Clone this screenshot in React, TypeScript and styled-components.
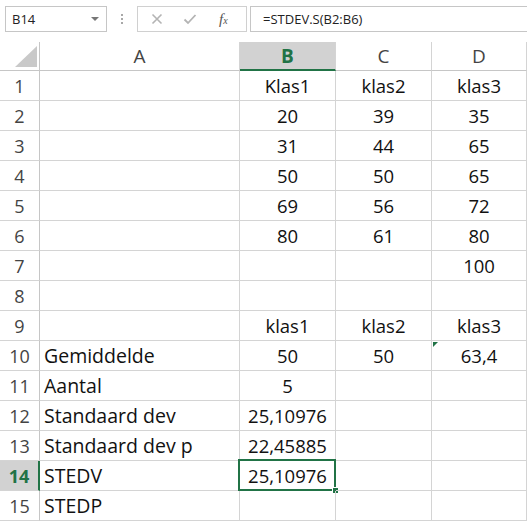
import React from "react"
import styled, { createGlobalStyle, css } from "styled-components"

const GlobalStyle = createGlobalStyle`
  html, body {
    margin: 0;
    padding: 0;
    background: #ffffff;
  }
  body {
    font-family: "Open Sans", "Liberation Sans", sans-serif;
  }
`

const GREEN = "#217346"
const LINE = "#d4d4d4"

const Page = styled.div`
  width: 527px;
  height: 521px;
  overflow: hidden;
  background: #ffffff;
`

const Toolbar = styled.div`
  display: flex;
  align-items: center;
  height: 26px;
  padding: 6px 0 0 5px;
  margin-bottom: 10px;
`

const NameBox = styled.div`
  box-sizing: border-box;
  width: 102px;
  height: 26px;
  border: 1px solid #c6c6c6;
  display: flex;
  align-items: center;
  justify-content: space-between;
  padding: 0 6px 0 6px;
  font-size: 13px;
  color: #222;
`

const Caret = styled.span`
  width: 0;
  height: 0;
  border-left: 4px solid transparent;
  border-right: 4px solid transparent;
  border-top: 4px solid #777;
  margin-right: 1px;
`

const Dots = styled.div`
  width: 30px;
  display: flex;
  flex-direction: column;
  align-items: center;
  gap: 2px;
  span {
    width: 2px;
    height: 2px;
    background: #a8a8a8;
  }
`

const FxButtons = styled.div`
  box-sizing: border-box;
  width: 110px;
  height: 26px;
  border: 1px solid #d0d0d0;
  display: flex;
  align-items: center;
  padding-left: 13px;
  gap: 20px;
  margin-right: 3px;
`

const Fx = styled.span`
  font-family: "Liberation Serif", "DejaVu Serif", serif;
  font-style: italic;
  font-size: 15px;
  color: #555;
  margin-left: 2px;
  sub {
    font-size: 10px;
    vertical-align: 0;
  }
`

const FormulaBox = styled.div`
  box-sizing: border-box;
  flex: 1;
  height: 26px;
  border: 1px solid #c6c6c6;
  border-right: none;
  display: flex;
  align-items: center;
  padding-left: 12px;
  font-size: 13px;
  color: #222;
`

const Sheet = styled.div`
  display: grid;
  grid-template-columns: 40px 200px 96px 96px 1fr;
  grid-template-rows: 29px repeat(15, 30px);
`

const Corner = styled.div`
  box-sizing: border-box;
  border-right: 1px solid #c6c6c6;
  border-bottom: 1px solid #c6c6c6;
  position: relative;
  &::after {
    content: "";
    position: absolute;
    right: 2px;
    bottom: 3px;
    width: 0;
    height: 0;
    border-left: 22px solid transparent;
    border-bottom: 21px solid #c9c9c9;
  }
`

const ColHead = styled.div<{ $active?: boolean }>`
  box-sizing: border-box;
  display: flex;
  align-items: center;
  justify-content: center;
  font-size: 19px;
  color: #444;
  border-right: 1px solid ${LINE};
  border-bottom: 1px solid #c6c6c6;
  ${(p) =>
    p.$active &&
    css`
      background: #d2d2d2;
      color: ${GREEN};
      font-weight: 700;
      border-bottom: 2px solid ${GREEN};
    `}
`

const RowHead = styled.div<{ $active?: boolean }>`
  box-sizing: border-box;
  display: flex;
  align-items: center;
  justify-content: center;
  font-size: 18px;
  color: #444;
  border-right: 1px solid #c6c6c6;
  border-bottom: 1px solid ${LINE};
  ${(p) =>
    p.$active &&
    css`
      background: #d2d2d2;
      color: ${GREEN};
      font-weight: 700;
      border-right: 2px solid ${GREEN};
    `}
`

const Cell = styled.div<{ $left?: boolean; $selected?: boolean; $flag?: boolean }>`
  box-sizing: border-box;
  position: relative;
  display: flex;
  align-items: center;
  justify-content: ${(p) => (p.$left ? "flex-start" : "center")};
  padding-left: ${(p) => (p.$left ? "4px" : "0")};
  font-size: ${(p) => (p.$left ? "19.5px" : "18.5px")};
  color: #111;
  white-space: nowrap;
  border-right: 1px solid ${LINE};
  border-bottom: 1px solid ${LINE};
  ${(p) =>
    p.$selected &&
    css`
      &::before {
        content: "";
        position: absolute;
        left: -2px;
        top: -2px;
        right: -1px;
        bottom: -1px;
        border: 2px solid ${GREEN};
      }
      &::after {
        content: "";
        position: absolute;
        right: -4px;
        bottom: -4px;
        width: 5px;
        height: 5px;
        background: ${GREEN};
        border: 1px solid #fff;
      }
    `}
  ${(p) =>
    p.$flag &&
    css`
      &::after {
        content: "";
        position: absolute;
        left: 1px;
        top: 1px;
        width: 0;
        height: 0;
        border-top: 5px solid ${GREEN};
        border-right: 5px solid transparent;
      }
    `}
`

const Cross = () => (
  <svg width="12" height="12" viewBox="0 0 12 12">
    <path d="M1.5 1.5 L10.5 10.5 M10.5 1.5 L1.5 10.5" stroke="#b4b4b4" strokeWidth="1.6" fill="none" />
  </svg>
)

const Check = () => (
  <svg width="14" height="12" viewBox="0 0 14 12">
    <path d="M1.5 6.5 L5 10 L12.5 2" stroke="#b4b4b4" strokeWidth="1.8" fill="none" />
  </svg>
)

type Row = { a?: string; b?: string; c?: string; d?: string }

const rows: Row[] = [
  { b: "Klas1", c: "klas2", d: "klas3" },
  { b: "20", c: "39", d: "35" },
  { b: "31", c: "44", d: "65" },
  { b: "50", c: "50", d: "65" },
  { b: "69", c: "56", d: "72" },
  { b: "80", c: "61", d: "80" },
  { d: "100" },
  {},
  { b: "klas1", c: "klas2", d: "klas3" },
  { a: "Gemiddelde", b: "50", c: "50", d: "63,4" },
  { a: "Aantal", b: "5" },
  { a: "Standaard dev", b: "25,10976" },
  { a: "Standaard dev p", b: "22,45885" },
  { a: "STEDV", b: "25,10976" },
  { a: "STEDP" },
]

export default function App() {
  return (
    <Page>
      <GlobalStyle />
      <Toolbar>
        <NameBox>
          B14
          <Caret />
        </NameBox>
        <Dots>
          <span />
          <span />
          <span />
        </Dots>
        <FxButtons>
          <Cross />
          <Check />
          <Fx>
            f<sub>x</sub>
          </Fx>
        </FxButtons>
        <FormulaBox>=STDEV.S(B2:B6)</FormulaBox>
      </Toolbar>
      <Sheet>
        <Corner />
        <ColHead>A</ColHead>
        <ColHead $active>B</ColHead>
        <ColHead>C</ColHead>
        <ColHead>D</ColHead>
        {rows.map((r, i) => {
          const n = i + 1
          return (
            <React.Fragment key={n}>
              <RowHead $active={n === 14}>{n}</RowHead>
              <Cell $left>{r.a}</Cell>
              <Cell $selected={n === 14}>{r.b}</Cell>
              <Cell>{r.c}</Cell>
              <Cell $flag={n === 10}>{r.d}</Cell>
            </React.Fragment>
          )
        })}
      </Sheet>
    </Page>
  )
}
